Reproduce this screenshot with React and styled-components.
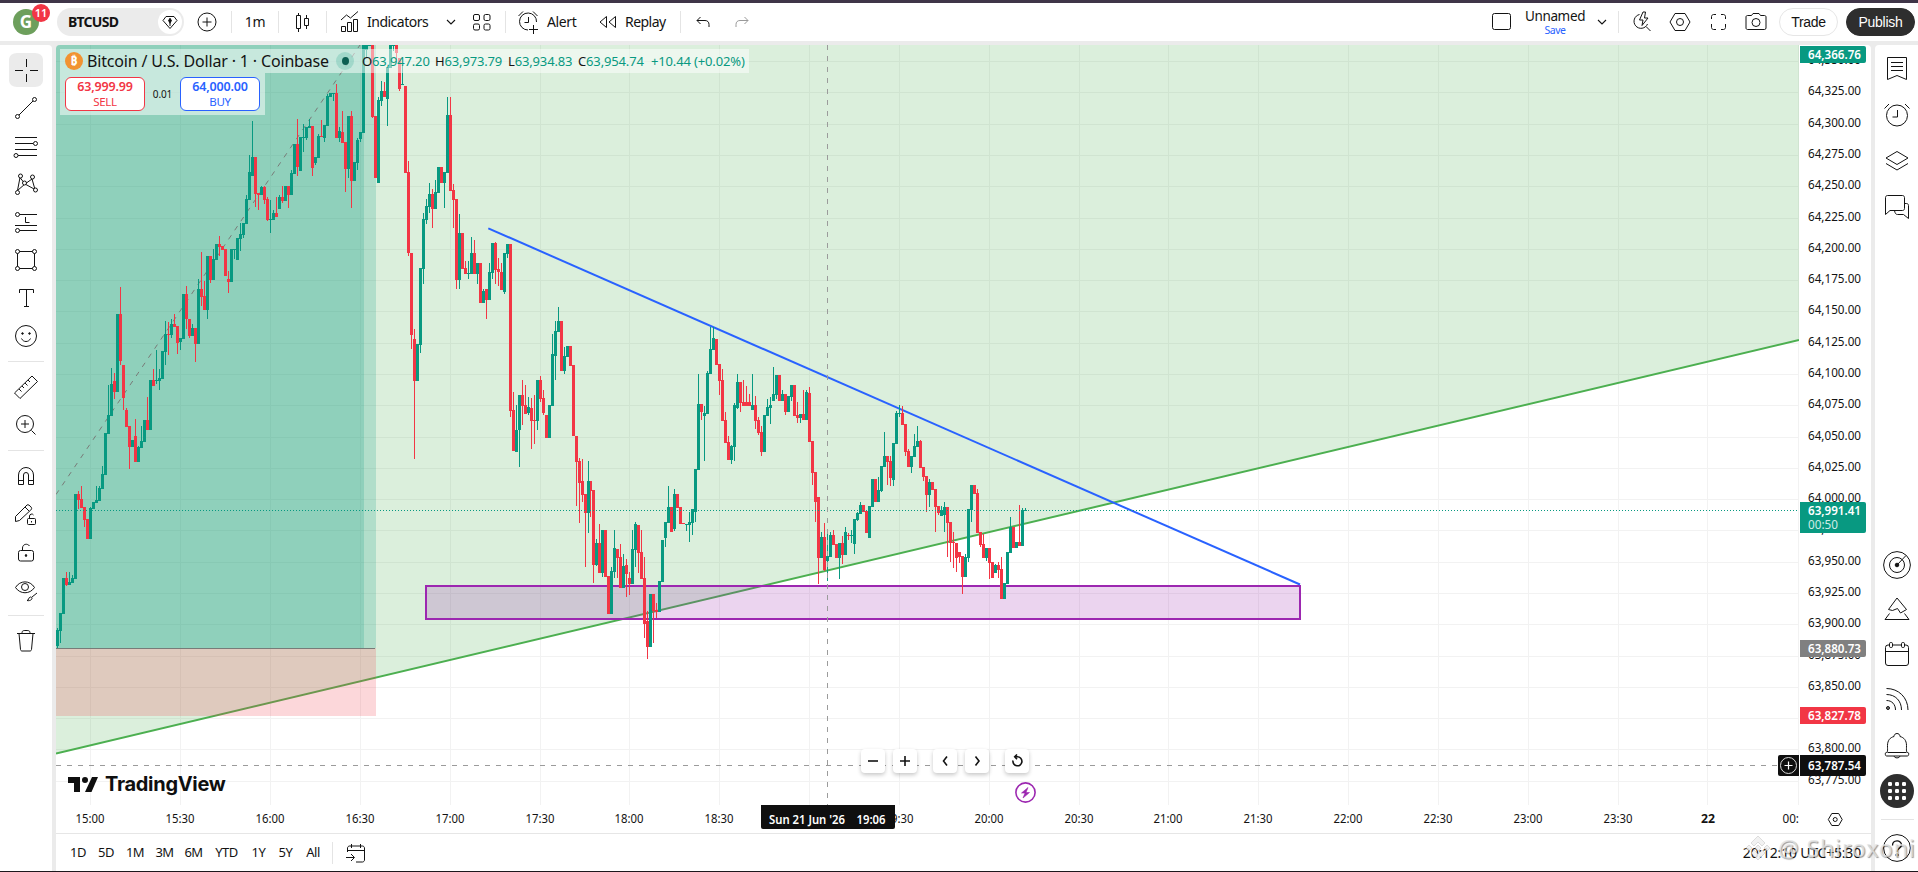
import React from "react";
import styled, { createGlobalStyle, css } from "styled-components";

const GlobalStyle = createGlobalStyle`
  * { box-sizing: border-box; }
  html, body { margin: 0; padding: 0; }
  body {
    background: #ebebeb;
    color: #0f0f0f;
    font-family: "Noto Sans", "Open Sans", sans-serif;
    overflow: hidden;
  }
`;

const INK = "#131313";
const UP = "#089981";
const DOWN = "#f23645";
const GAP = "#ebebeb";

/* ---------- page frame ---------- */

const Page = styled.div`
  width: 1918px;
  height: 872px;
  display: flex;
  flex-direction: column;
  background: ${GAP};
  border-top: 3px solid #3f3548;
  border-bottom: 1px solid #1d171d;
`;

const Header = styled.header`
  height: 38px;
  flex: none;
  display: flex;
  align-items: center;
  background: #fff;
  margin-bottom: 4px;
`;

const Body = styled.div`
  flex: 1;
  min-height: 0;
  display: flex;
  gap: 4px;
`;

const Center = styled.main`
  width: 1815px;
  display: flex;
  flex-direction: column;
  background: #fff;
  border-radius: 4px 4px 0 0;
  overflow: hidden;
`;

const SideBar = styled.nav`
  width: ${(p) => p.$w}px;
  flex: none;
  display: flex;
  flex-direction: column;
  align-items: center;
  background: #fff;
  border-radius: ${(p) => (p.$right ? "4px 0 0 0" : "0 4px 0 0")};
  padding: ${(p) => (p.$right ? "1px 0 0 1px" : "6px 0 0")};
`;

/* ---------- header parts ---------- */

const Cell = styled.div`
  width: ${(p) => p.$w}px;
  flex: none;
  height: 34px;
  margin-right: ${(p) => p.$mr || 0}px;
  display: flex;
  align-items: center;
  justify-content: ${(p) => (p.$start ? "flex-start" : "center")};
  svg { flex: none; }
`;

const VSep = styled.div`
  width: 1px;
  height: ${(p) => p.$h || 22}px;
  flex: none;
  margin-right: ${(p) => p.$mr || 0}px;
  background: #e4e4e4;
`;

const Label = styled.span`
  font-size: ${(p) => p.$size || 14}px;
  font-weight: ${(p) => p.$weight || 400};
  letter-spacing: ${(p) => p.$ls || 0}px;
  color: ${(p) => p.$color || INK};
  line-height: 1;
  white-space: nowrap;
`;

const Avatar = styled.div`
  position: relative;
  width: 26px;
  height: 26px;
  margin: 0 18px 0 13px;
  flex: none;
  border-radius: 50%;
  background: #6d9f5c;
  color: #fff;
  font: 700 17px/26px "Open Sans", sans-serif;
  text-align: center;
`;

const Badge = styled.span`
  position: absolute;
  left: 19px;
  top: -5px;
  width: 18px;
  height: 18px;
  border-radius: 50%;
  background: ${DOWN};
  font: 600 11px/18px "Noto Sans", sans-serif;
`;

const SymbolPill = styled.div`
  width: 127px;
  height: 28px;
  flex: none;
  padding: 0 2px 0 11px;
  border-radius: 14px;
  background: #ebebeb;
  display: flex;
  align-items: center;
  justify-content: space-between;
`;

const PillDisc = styled.span`
  width: 24px;
  height: 24px;
  border-radius: 50%;
  background: #fff;
  display: grid;
  place-items: center;
`;

const LayoutName = styled.div`
  width: 62px;
  flex: none;
  display: flex;
  flex-direction: column;
  align-items: center;
  gap: 1px;
  padding-top: 1px;
`;

const RoundButton = styled.button`
  width: ${(p) => p.$w}px;
  height: 28px;
  flex: none;
  padding: 0;
  border-radius: 14px;
  border: 1px solid ${(p) => (p.$dark ? "#2e2e2e" : "#e6e6e6")};
  background: ${(p) => (p.$dark ? "#2e2e2e" : "#fff")};
  margin-right: ${(p) => p.$mr}px;
`;

/* ---------- side tool cells ---------- */

const Tool = styled.div`
  width: 34px;
  height: ${(p) => p.$h || 38}px;
  flex: none;
  display: grid;
  place-items: center;
  ${(p) =>
    p.$active &&
    css`
      background: #ebebeb;
      background-clip: padding-box;
      border-top: 2px solid transparent;
      border-bottom: 2px solid transparent;
      border-radius: 8px;
    `}
`;

const HSep = styled.div`
  width: ${(p) => p.$w || 36}px;
  height: 1px;
  flex: none;
  margin: ${(p) => p.$m || "6px 0"};
  background: #e4e4e4;
`;

const Push = styled.div`
  ${(p) => (p.$row ? "margin-left" : "margin-top")}: auto;
`;

const AppsDisc = styled.div`
  width: 34px;
  height: 34px;
  border-radius: 50%;
  background: #2e2e2e;
  display: grid;
  place-items: center;
`;

/* ---------- chart parts ---------- */

const ChartArea = styled.section`
  position: relative;
  width: 1815px;
  height: 788px;
  flex: none;
`;

const ChartSvg = styled.svg`
  display: block;
  text {
    font-family: "Noto Sans", "Open Sans", sans-serif;
    font-size: 12px;
    fill: ${INK};
  }
`;

const Legend = styled.div`
  position: absolute;
  left: 4px;
  top: 4px;
`;

const LegendRow = styled.div`
  width: 689px;
  height: 24px;
  padding-left: 5px;
  display: flex;
  align-items: center;
  background: rgba(255, 255, 255, 0.5);
`;

const TradeRow = styled.div`
  width: 205px;
  height: 42px;
  padding: 4px 5px 4px;
  display: flex;
  align-items: center;
  justify-content: space-between;
  background: rgba(255, 255, 255, 0.5);
`;

const TradeButton = styled.div`
  width: 80px;
  height: 34px;
  border: 1px solid ${(p) => p.$c};
  border-radius: 6px;
  background: #fff;
  color: ${(p) => p.$c};
  display: flex;
  flex-direction: column;
  align-items: center;
  justify-content: center;
  gap: 2px;
`;

const Coin = styled.span`
  width: 18px;
  height: 18px;
  margin-right: 4px;
  border-radius: 50%;
  background: #f19332;
  color: #fff;
  display: grid;
  place-items: center;
`;

const StatusDot = styled.span`
  width: 18px;
  height: 18px;
  margin: 0 8px 0 8px;
  border-radius: 50%;
  background: rgba(8, 153, 129, 0.2);
  display: grid;
  place-items: center;
  &::after {
    content: "";
    width: 7px;
    height: 8px;
    border-radius: 50%;
    background: #0b5f52;
  }
`;

const Ohlc = styled.span`
  width: ${(p) => p.$w}px;
  flex: none;
  font-size: 13px;
  line-height: 1;
  letter-spacing: -0.15px;
  white-space: nowrap;
  color: ${UP};
  b { font-weight: 400; color: ${INK}; }
`;

const NavControls = styled.div`
  position: absolute;
  left: 805px;
  top: 704px;
  display: flex;
  gap: 8px;
`;

const NavButton = styled.div`
  width: 24px;
  height: 24px;
  margin-left: ${(p) => p.$ml || 0}px;
  border-radius: 4px;
  background: #fff;
  box-shadow: 0 2px 4px rgba(0, 0, 0, 0.22);
  display: grid;
  place-items: center;
`;

const Brand = styled.div`
  position: absolute;
  left: 12px;
  top: 727px;
  display: flex;
  align-items: center;
  gap: 7px;
  font: 700 20px/24px "Inter", sans-serif;
  letter-spacing: -0.3px;
  color: #0f0f0f;
`;

/* ---------- bottom bar ---------- */

const BottomBar = styled.footer`
  flex: 1;
  border-top: 1px solid #e6e6e6;
  padding: 0 10px 0 8px;
  display: flex;
  align-items: center;
`;

const Watermark = styled.div`
  position: absolute;
  left: 1746px;
  top: 832px;
  display: flex;
  align-items: center;
  gap: 8px;
  font: 400 23px/32px "Noto Sans", sans-serif;
  letter-spacing: 0.9px;
  color: rgba(228, 228, 228, 0.8);
  text-shadow: 1px 1px 1px rgba(0, 0, 0, 0.4);
  white-space: nowrap;
`;

/* ---------- icons ---------- */

const Icon = ({ size = 28, w, h, sw = 1, color = INK, children }) => (
  <svg
    width={w || size}
    height={h || size}
    viewBox={`0 0 ${w || size} ${h || size}`}
    fill="none"
    stroke={color}
    strokeWidth={sw}
  >
    {children}
  </svg>
);

const Chevron = () => (
  <Icon size={12}><path d="M2 4l4 4 4-4" strokeWidth="1.1" /></Icon>
);

/* ---------- chart data: [direction, bodyTop, bodyBottom, wickTop, wickBottom] per minute ---------- */

const BARS = `
g 630 646 628 648|g 613 631 613 643|g 578 614|r 578 585 572 586|g 582 585 572 585|g 578 583 575 583|g 494 579|r 494 500 491 509|r 499 508 486 508|r 507 520 507 527|
r 519 539|g 508 539 507 539|g 502 509|g 500 503 486 503|g 488 501 486 501|g 474 489 466 489|g 433 475|g 415 434 385 434|g 384 416 368 416|r 381 392 373 399|
g 314 392|r 314 361 287 365|r 365 398 365 410|r 410 427 408 427|r 426 447 426 469|g 440 447|r 436 462 419 462|g 447 462 446 462|g 441 448 426 448|g 420 442|
r 420 430 397 430|g 380 430|r 380 386 369 386|g 380 381 350 384|g 378 381 369 390|g 351 379|g 334 352 321 365|r 334 335 322 355|g 324 335 319 338|r 324 327 314 327|
r 326 343 326 354|g 338 342 338 350|g 294 339|r 294 319 286 329|r 319 336 319 338|g 328 336 324 336|r 328 344 328 362|g 289 344 279 344|r 289 297 252 306|r 296 310 281 310|
g 256 310 256 319|r 256 280 256 283|g 259 280 249 280|g 244 260|r 244 247 236 256|r 246 250|r 249 276|r 279 282 271 293|g 249 282|g 249 250 249 259|
g 238 260|g 234 239 223 251|g 223 235 223 238|g 199 224 195 224|g 172 200 155 200|g 157 176 121 176|r 157 194 157 207|r 193 195 193 210|g 187 195 186 195|r 187 200 186 204|
r 199 220 197 221|g 219 220 200 233|g 213 220 210 220|r 213 217 197 217|g 197 209 195 209|r 197 201 186 203|g 186 201|r 186 195 186 208|g 173 195 170 195|g 144 174|
r 144 167 119 176|g 137 171|g 137 138 124 152|g 127 138 127 140|g 126 128 119 128|r 126 168 126 176|g 157 163 157 165|g 136 158 134 158|r 136 137 120 137|g 125 138 125 142|
g 96 126 94 126|g 93 97|g 93 94 93 101|r 93 138 84 138|g 131 138 127 142|r 132 143 111 143|r 142 169 142 192|g 116 169 116 178|r 116 181 111 208|g 162 181|
g 140 163 138 170|g 132 139 132 142|g 40 133|g 45 50 40 58|g 40 46|r 40 117 40 118|r 116 178|g 100 183 97 183|g 91 101 81 106|r 91 97 82 97|
g 67 99 67 126|g 40 68|g 40 46 40 51|r 40 53 40 60|r 58 89 58 91|g 84 85 65 85|r 86 173|r 172 253 161 256|r 253 335 253 349|r 339 381 329 459|
g 344 381|g 268 345 268 353|g 219 269 213 284|g 206 220 199 224|g 194 207 183 213|r 194 209 189 228|g 192 209 180 209|g 167 193|r 167 183|g 172 183 172 208|
g 115 173 97 173|r 115 191 97 191|r 190 200 184 228|r 199 280 199 289|g 233 280 214 289|r 233 269|r 268 274 261 274|g 273 274 261 279|g 253 274 237 274|r 253 274 240 274|
g 263 274 263 284|r 263 303|g 291 303 289 303|r 289 300 289 319|g 272 300 263 300|g 243 273 243 279|r 243 270 242 284|r 269 272 258 286|r 272 290 263 290|g 253 292 253 294|
g 244 254 244 258|r 244 411 244 417|r 410 451 392 451|g 430 452 405 452|g 395 430 395 467|r 395 406 380 425|r 405 414 385 414|g 407 413 397 415|r 408 421 398 449|r 420 421 395 444|
g 380 421 380 430|r 380 399 376 402|r 398 413 390 415|r 415 438|g 405 438|g 354 406 334 406|g 331 356 321 380|g 321 332 307 332|r 321 371|g 356 371 347 374|
g 346 357|r 346 366|r 365 436|r 436 462 436 506|r 461 483 458 523|r 481 495 459 502|r 494 513 494 567|g 481 513 461 533|r 481 491 481 517|r 490 565 490 583|
g 543 565 539 566|r 543 573 524 573|g 530 573 530 577|r 530 577|r 576 614|g 571 614 567 614|g 548 572 530 578|r 549 558 549 578|r 557 588 544 588|g 566 588 554 588|
r 565 574 559 597|r 578 584 572 595|g 549 584 530 584|g 524 550 522 567|r 525 553 525 573|r 552 579 530 579|r 578 624 557 638|r 621 647 611 659|g 594 647|r 594 611 594 643|
r 610 612 603 618|g 581 612|g 540 582|g 522 538 522 547|g 507 523 486 523|r 507 532|g 494 529 489 531|r 494 508|r 507 524|r 523 524|
g 524 525 524 531|g 522 525 512 542|g 509 523 509 535|g 469 512 469 522|g 404 470 374 470|r 404 412 404 420|g 413 416 406 461|g 373 414 371 414|g 349 374 327 374|g 338 350 327 350|
r 339 365|r 364 381 364 395|r 380 421 369 421|r 420 443 412 443|r 442 460 436 460|g 446 460 445 464|g 405 447 403 461|g 382 408 374 409|r 382 403 382 412|r 402 406 380 406|
r 402 406 386 406|r 402 406 394 406|g 405 410 374 410|r 405 421 396 429|r 420 433 417 435|r 432 452 426 456|g 415 452|g 407 416 399 416|g 405 408 397 424|g 394 401 367 401|
g 375 395 375 399|r 375 401|g 394 401 390 401|r 394 412 394 415|g 396 412|g 385 397 385 401|r 385 416|r 415 418 402 423|g 414 418 414 423|r 414 420 390 420|
g 392 420 390 420|r 393 442 387 442|r 441 473 441 485|r 472 502 472 522|r 497 558 497 584|g 537 558 532 558|r 537 570 523 571|g 556 561 534 581|g 535 557 532 557|r 535 545 530 545|
r 544 558|g 543 558 543 579|r 543 555 536 564|g 532 555 527 555|r 535 536 533 540|g 535 536 530 543|g 519 544 519 554|g 513 520 512 521|g 505 514 502 514|r 505 512|
r 511 533|g 506 538|g 479 507|r 479 502|g 490 502 477 502|g 466 491 466 492|g 456 467 432 467|r 456 462 456 485|r 461 478 456 486|g 443 480 443 486|
g 413 444 411 444|g 413 414 405 417|r 413 425 406 425|r 424 452 424 456|r 451 467 449 467|g 456 467 456 473|g 446 457 434 457|g 441 447 426 447|r 441 468 440 468|r 467 477 467 481|
r 476 495 476 512|g 482 495 479 507|r 482 490|r 489 507 489 532|r 506 513 506 515|g 510 516 506 516|g 507 515 502 532|r 507 523 507 557|r 522 543 522 562|r 542 543 532 568|
r 543 558 543 572|r 552 557 552 563|r 556 577 556 594|g 557 577 554 577|g 509 558 509 562|g 485 510 485 522|r 485 494|r 493 533 489 533|r 532 545 532 547|r 544 558 534 558|
g 548 558 548 561|r 548 563 548 579|r 562 578|g 565 573 564 573|r 565 570 562 578|r 569 599 557 599|g 583 599|g 552 584|g 527 553 517 553|r 527 548|
g 542 548|r 542 546 505 546|g 510 546 508 546|g 510 511 508 511`
  .trim()
  .split("|")
  .map((s, i) => {
    const [dir, ...n] = s.trim().split(" ");
    const [bt, bb, wt = bt, wb = bb] = n.map(Number);
    return { x: i <= 177 ? 57 + 3 * i : 56 + 3 * i, up: dir === "g", bt, bb, wt, wb };
  });

const rowY = (i) => Math.floor(61.6 + 31.29 * i);
const PRICES = Array.from({ length: 24 }, (_, i) => ({
  y: rowY(i),
  text: (64350 - 25 * i).toLocaleString("en-US") + ".00",
}));
const minuteX = (j) => Math.round(57.495 + 2.9944 * (11 + 30 * j));
const TIMES = Array.from({ length: 19 }, (_, j) => {
  const m = 15 * 60 + 30 * j;
  const hh = String(Math.floor(m / 60) % 24).padStart(2, "0");
  const mm = String(m % 60).padStart(2, "0");
  return { x: minuteX(j), text: j === 18 ? "22" : `${hh}:${mm}` };
});

const Candles = ({ up }) => {
  const d = BARS.filter((b) => b.up === up)
    .map(
      (b) =>
        `M${b.x - 1} ${b.bt}h3V${b.bb}h-3z` +
        (b.wt < b.bt ? `M${b.x} ${b.wt}h1V${b.bt}h-1z` : "") +
        (b.wb > b.bb ? `M${b.x} ${b.bb}h1V${b.wb}h-1z` : "")
    )
    .join("");
  return <path d={d} fill={up ? UP : DOWN} shapeRendering="crispEdges" />;
};

const PriceTag = ({ y, h, color, text, sub }) => (
  <g>
    <path d={`M1800 ${y}h64a2 2 0 0 1 2 2v${h - 4}a2 2 0 0 1-2 2h-64z`} fill={color} />
    <text x="1808" y={sub ? y + 12.5 : y + h / 2 + 4} textLength="53" lengthAdjust="spacingAndGlyphs" style={{ fill: "#fff", fontWeight: 600 }}>{text}</text>
    {sub && (
      <text x="1808" y={y + 26.5} textLength="30" lengthAdjust="spacingAndGlyphs" style={{ fill: "#cfebe6" }}>{sub}</text>
    )}
  </g>
);

const Chart = () => (
  <ChartSvg width="1815" height="788" viewBox="56 45 1815 788">
    <defs>
      <clipPath id="pane"><rect x="56" y="45" width="1743" height="760" /></clipPath>
    </defs>
    <g clipPath="url(#pane)">
      <g fill="#f2f2f2">
        {PRICES.map((p) => <rect key={p.y} x="56" y={p.y} width="1743" height="1" />)}
        {TIMES.map((t) => <rect key={t.x} x={t.x} y="45" width="1" height="760" />)}
        <rect x="1798" y="45" width="1" height="760" />
      </g>
      <path d="M56 45H1799V340L56 753.5z" fill="#4caf50" fillOpacity="0.2" />
      <path d="M56 753.5L1799 340" stroke="#4caf50" strokeWidth="2" />
      <rect x="56" y="648" width="320" height="68" fill={DOWN} fillOpacity="0.2" />
      <rect x="56" y="45" width="320" height="603" fill={UP} fillOpacity="0.2" />
      <rect x="56" y="45" width="308" height="603" fill={UP} fillOpacity="0.2" />
      <rect x="56" y="648" width="319" height="1" fill="#787b78" />
      <path d="M56 494.5L360 45" stroke="#787b78" strokeDasharray="5 6" />
      <rect x="426" y="586" width="874" height="33" fill="#9c27b0" fillOpacity="0.2" stroke="#9c27b0" strokeWidth="2" />
      <path d="M488.3 228.3L1300 584.5" stroke="#2962ff" strokeWidth="2" />
      <Candles up={false} />
      <Candles up />
      <path d="M56 510.5H1799" stroke={UP} strokeDasharray="1 2" />
      <path d="M827.5 45V805M56 765.5H1778" stroke="#9b9b9b" strokeDasharray="5 6" />
      <circle cx="1025.500" cy="792.5" r="9.6" fill="#fff" stroke="#9c27b0" strokeWidth="1.6" />
      <path d="M1028 787.5L1021.500 793h3.5l-2 5 6.500-5.500h-3.500z" fill="#9c27b0" stroke="#9c27b0" strokeWidth="0.6" />
    </g>

    {PRICES.map((p) => (
      <text key={p.y} x="1808" y={p.y + 3.3} textLength="53" lengthAdjust="spacingAndGlyphs">{p.text}</text>
    ))}
    <PriceTag y={46} h={17} color={UP} text="64,366.76" />
    <PriceTag y={502} h={31} color={UP} text="63,991.41" sub="00:50" />
    <PriceTag y={640} h={17} color="#808080" text="63,880.73" />
    <PriceTag y={707} h={17} color={DOWN} text="63,827.78" />
    <PriceTag y={755} h={21} color="#0f0f0f" text="63,787.54" />
    <path d="M1799 755h-19a2 2 0 0 0-2 2v17a2 2 0 0 0 2 2h19z" fill="#0f0f0f" />
    <circle cx="1788.500" cy="765.500" r="8" fill="none" stroke="#d8d8d8" />
    <path d="M1784.500 765.500h8M1788.500 761.500v8" stroke="#fff" strokeWidth="1.2" />

    {TIMES.slice(0, 18).map((t) => (
      <text key={t.x} x={t.x - 14.5} y="823.3" textLength="29" lengthAdjust="spacingAndGlyphs">{t.text}</text>
    ))}
    <text x="1701" y="823.3" textLength="14" lengthAdjust="spacingAndGlyphs" style={{ fontWeight: 700 }}>22</text>
    <text x="1782.500" y="823.3" textLength="16.500" lengthAdjust="spacingAndGlyphs">00:</text>
    <path d="M761 805h134v22a2 2 0 0 1-2 2h-130a2 2 0 0 1-2-2z" fill="#0f0f0f" />
    <text x="769" y="824.300" textLength="76" lengthAdjust="spacingAndGlyphs" style={{ fill: "#fff", fontWeight: 600 }}>Sun 21 Jun '26</text>
    <text x="856.500" y="824.300" textLength="29" lengthAdjust="spacingAndGlyphs" style={{ fill: "#fff", fontWeight: 600 }}>19:06</text>
    <g fill="none" stroke={INK}>
      <path d="M1831.800 813.500h6.900l3.500 6-3.500 6h-6.900l-3.500-6z" />
      <circle cx="1835.200" cy="819.500" r="2" />
    </g>
  </ChartSvg>
);

const LeftTools = () => (
  <SideBar $w={52}>
    <Tool $active><Icon><path d="M14.500 3v8M14.500 18v8M3 14.500h8M18 14.500h8" /></Icon></Tool>
    <Tool><Icon><circle cx="5.500" cy="22.500" r="2" /><circle cx="22.500" cy="5.500" r="2" /><path d="M7 21L21 7" /></Icon></Tool>
    <Tool><Icon><path d="M3 5.500h22M3 11.500h18M3 17.500h22M6 23.500h19" /><circle cx="23.500" cy="11.500" r="2" fill="#fff" /><circle cx="4" cy="23.500" r="2" fill="#fff" /></Icon></Tool>
    <Tool><Icon><path d="M5.500 20.500L8 7.500l5 6.500 7-5 3 10.500-10-5.500z" /><g fill="#fff"><circle cx="8.500" cy="6" r="2" /><circle cx="20.500" cy="7" r="2" /><circle cx="5.500" cy="22.500" r="2" /><circle cx="23.500" cy="20" r="2" /><circle cx="12.500" cy="13" r="2" /></g></Icon></Tool>
    <Tool><Icon><path d="M7.500 6.500H25M3 17.500h22M7.500 22.500H25M13.500 9v5.500h4" /><circle cx="5.500" cy="6.500" r="2" /><circle cx="5.500" cy="22.500" r="2" /></Icon></Tool>
    <Tool><Icon><path d="M7.500 5.500h13M7.500 22.500h13M5.500 7.500v13M22.500 7.500v13" /><circle cx="5.500" cy="5.500" r="2" /><circle cx="22.500" cy="5.500" r="2" /><circle cx="5.500" cy="22.500" r="2" /><circle cx="22.500" cy="22.500" r="2" /></Icon></Tool>
    <Tool><Icon><path d="M7.500 9V5.500h14V9M14.500 5.500v17M12 22.500h5" /></Icon></Tool>
    <Tool><Icon><circle cx="14" cy="14" r="10.500" /><path d="M9.500 16.500c1 2 2.500 3 4.500 3s3.500-1 4.500-3" /><circle cx="10.500" cy="11.500" r=".8" fill={INK} /><circle cx="17.500" cy="11.500" r=".8" fill={INK} /></Icon></Tool>
    <HSep />
    <Tool><Icon><path d="M2.500 20L20 3l5.500 5.500L8 25.500zM7 16l2.500 2.500M10 13l2 2M13 10l2.500 2.500M16 7l2 2" /></Icon></Tool>
    <Tool><Icon><circle cx="13" cy="13" r="8.500" /><path d="M19.500 19.500l4 4M9 13h8M13 9v8" /></Icon></Tool>
    <HSep />
    <Tool><Icon><path d="M6.500 22.500V13a7.500 7.500 0 0 1 15 0v9.500h-5V13a2.500 2.500 0 0 0-5 0v9.500zM6.500 18.500h5M16.500 18.500h5" /></Icon></Tool>
    <Tool><Icon><path d="M3.500 16.500L15 5c1-1 3 .8 4 2s.8 2-.2 3L7.500 20.500l-4 1zM13 7l4 4" /><rect x="15.500" y="18.500" width="8" height="6" rx="1" /><path d="M17.500 18.500V16a2.200 2.200 0 0 1 4-1M19.500 21v1.500" /></Icon></Tool>
    <Tool><Icon><rect x="6.500" y="12.500" width="15" height="10.500" rx="2" /><path d="M10.500 12.500V10c0-4 5-5 7-2M14 16v3" /><circle cx="14" cy="17.500" r=".7" fill={INK} /></Icon></Tool>
    <Tool><Icon><path d="M3.500 11.500c4.500-7.500 14.500-7.500 19 0-4.500 7-14.500 7-19 0z" /><circle cx="13" cy="11" r="3.500" /><path d="M15 24.500c2 0 1-3 3.500-3.500 1.500 0 2 1.500 1 2.500s-3 1.500-4.500 1zM20 21l5-4" /></Icon></Tool>
    <HSep />
    <Tool><Icon><path d="M5 6.500h18M10 6.500c0-3 1-3 4-3s4 0 4 3M7 6.500l1.500 16c.1 1 .8 1.500 1.500 1.500h8c.7 0 1.400-.5 1.500-1.500L21 6.500" /></Icon></Tool>
  </SideBar>
);

const RightTools = () => (
  <SideBar $w={43} $right>
    <Tool $h={46}><Icon><path d="M4.500 2.500h19v22l-9.500-4-9.500 4zM8 7.500h12M8 11.500h12M8 15.500h12" /></Icon></Tool>
    <Tool $h={46}><Icon><circle cx="14" cy="14.500" r="10.500" /><path d="M14.500 9v7h-5M1.500 7.500l4.500-4.500M22 3l4.500 4.500" /></Icon></Tool>
    <Tool $h={46}><Icon><path d="M14 4.500l11 6.500-11 6.500L3 11zM3 16.500l11 6.500 11-6.500" /></Icon></Tool>
    <Tool $h={46}><Icon><path d="M2.500 4.500c0-1 .8-2 2-2h15c1.200 0 2 1 2 2v11c0 1.200-.8 2-2 2H7l-4.500 4zM21.500 10.500h2c1.200 0 2 .8 2 2v13l-5-4h-6c-1.500 0-2.500-1-3-4" /></Icon></Tool>
    <Push />
    <Tool $h={44}><Icon><circle cx="14" cy="14" r="13.400" /><circle cx="14" cy="14" r="7.500" /><path d="M14 14l9-9.500" /><circle cx="14" cy="14" r="1.800" fill={INK} /></Icon></Tool>
    <Tool $h={44}><Icon><path d="M14 3l9.500 11.500-6 3.500-3-4.500-5 2-4-1zM6.500 18.500L2 24.500h24l-4.500-6" /></Icon></Tool>
    <Tool $h={45}><Icon><rect x="2.500" y="5" width="23" height="20.500" rx="2.500" /><path d="M2.500 11.500h23" /><rect x="6.500" y="2.500" width="3" height="5" rx="1.200" fill="#fff" /><rect x="18.500" y="2.500" width="3" height="5" rx="1.200" fill="#fff" /></Icon></Tool>
    <Tool $h={46}><Icon><path d="M3.500 3.500c12 0 21.500 9 21.500 21.500M3.500 9.500c9 0 15 6.500 15 15.500M3.500 15.500c5.500 0 9 4 9 9.500" /><circle cx="5" cy="23" r="1.500" fill="#777" /></Icon></Tool>
    <Tool $h={46}><Icon><path d="M3 21.500c2 0 1.500-2 1.500-7 0-5 2.500-8 6.500-9 0-4 6-4 6 0 4 1 6.500 4 6.500 9 0 5-.5 7 1.500 7 1 0 1 3.500-.5 3.500H3.500c-1.500 0-1.500-3.500-.5-3.500zM4.500 21.500h19M11 25c.5 2.500 5.500 2.500 6 0" /></Icon></Tool>
    <Tool $h={46}>
      <AppsDisc>
        <Icon size={18} color="none">
          {[2, 9, 16].map((y) => [2, 9, 16].map((x) => <rect key={x + "-" + y} x={x - 2} y={y - 2} width="4" height="4" rx="1.300" fill="#fff" />))}
        </Icon>
      </AppsDisc>
    </Tool>
    <HSep $w={33} $m="5px 0 5px" />
    <Tool $h={46}><Icon><circle cx="14" cy="14" r="13.400" /><path d="M9.500 11.500c0-6 9-6 9-.5 0 3.500-4.500 3-4.500 7" strokeWidth="1.300" /><circle cx="14" cy="21" r="1.200" /></Icon></Tool>
  </SideBar>
);

const TopBar = () => (
  <Header>
    <Avatar>G<Badge>11</Badge></Avatar>
    <SymbolPill>
      <Label $size={14} $weight={700} $ls={-0.75}>BTCUSD</Label>
      <PillDisc><Icon size={18}><path d="M5 3.500h8l3 4-7 8-7-8z" /><path d="M9 5l2 2.500L9 11 7 7.500z" fill={INK} stroke="none" /><path d="M9 5v8" /></Icon></PillDisc>
    </SymbolPill>
    <Cell $w={45} $mr={2}><Icon size={20}><circle cx="10" cy="10" r="9" /><path d="M10 5.500v9M5.500 10h9" /></Icon></Cell>
    <VSep />
    <Cell $w={46}><Label $ls={-0.4}>1m</Label></Cell>
    <VSep />
    <Cell $w={45} $mr={2}><Icon size={20}><path d="M4.500 3.500h4v13h-4zM6.500 1v2.500M6.500 16.500V20M12.500 6.500h4v7h-4zM14.500 3v3.500M14.500 13.500V17" /></Icon></Cell>
    <VSep />
    <Cell $w={106} $start>
      <Icon w={40}><path d="M14.500 18.500h4v5h-4zM20.500 14.500h4v9h-4zM26.500 11.500h4v12h-4zM14 12l5.500-5 4 3L31 3.500" /></Icon>
      <Label $ls={-0.5}>Indicators</Label>
    </Cell>
    <Cell $w={35}><Chevron /></Cell>
    <Cell $w={28} $mr={9}><Icon size={20}><rect x="1.500" y="2.500" width="6" height="6" rx="1.500" /><rect x="12" y="2.500" width="6" height="6" rx="1.500" /><rect x="1.500" y="12" width="6" height="6" rx="1.500" /><rect x="12" y="12" width="6" height="6" rx="1.500" /></Icon></Cell>
    <VSep />
    <Cell $w={88} $start>
      <Icon w={41}><path d="M22 22a8.500 8.500 0 1 1 8.500-8M22.500 9v5.500h-4M12.500 8l4.500-4.500M27 3.500L31.500 8M27.500 17v9M23 21.500h9" /></Icon>
      <Label $ls={-0.4}>Alert</Label>
    </Cell>
    <Cell $w={86} $start>
      <Icon w={31}><path d="M12.500 8.500v11L6 14zM21.500 8.500v11L15 14z" /></Icon>
      <Label $ls={-0.55}>Replay</Label>
    </Cell>
    <VSep />
    <Cell $w={44}><Icon size={16}><path d="M5.500 3L2 6.500 5.500 10M2 6.500h8c2.500 0 4 1.500 4 4V13" /></Icon></Cell>
    <Cell $w={33}><Icon size={16} color="#9a9a9a"><path d="M10.500 3L14 6.500 10.500 10M14 6.500H6c-2.500 0-4 1.500-4 4V13" /></Icon></Cell>
    <Push $row />
    <Cell $w={44}><Icon size={20}><rect x=".5" y="1.500" width="18" height="16" rx="2" /></Icon></Cell>
    <LayoutName>
      <Label $size={13.500} $ls={-0.35}>Unnamed</Label>
      <Label $size={10.500} $ls={-0.5} $color="#2962ff">Save</Label>
    </LayoutName>
    <Cell $w={32}><Chevron /></Cell>
    <VSep $mr={5} />
    <Cell $w={36}><Icon size={22}><path d="M8.500 3.500a7 7 0 1 0 8 9.500M15 15.500l4.500 4.500M12 1L8.500 9H12l-1 5.500L17 7h-3.500l1-6z" /></Icon></Cell>
    <Cell $w={40}><Icon size={22}><path d="M6 2.500h10l5 8.500-5 8.500H6L1 11z" /><circle cx="11" cy="11" r="3.500" /></Icon></Cell>
    <Cell $w={38}><Icon size={18}><path d="M1.500 6V3.500c0-1 1-2 2-2H6M11 1.500h2.500c1 0 2 1 2 2V6M15.500 11v3.500c0 1-1 2-2 2H11M6 16.500H3.500c-1 0-2-1-2-2V11" /></Icon></Cell>
    <Cell $w={35} $mr={6}><Icon size={22}><path d="M6.500 4.500L8 2.500h6l1.500 2h4c1 0 1.500.7 1.500 1.500v11c0 1-.7 1.500-1.500 1.500h-17c-1 0-1.500-.7-1.500-1.500V6c0-1 .7-1.500 1.500-1.500z" /><circle cx="11" cy="11.500" r="4" /></Icon></Cell>
    <RoundButton $w={59} $mr={8}><Label $size={14} $ls={-0.3}>Trade</Label></RoundButton>
    <RoundButton $w={69} $mr={3} $dark><Label $size={14} $ls={-0.3} $color="#fff">Publish</Label></RoundButton>
  </Header>
);

const RANGES = [["1D", 28], ["5D", 28], ["1M", 30], ["3M", 29], ["6M", 29], ["YTD", 37], ["1Y", 27], ["5Y", 27], ["All", 28]];

export default function App() {
  return (
    <>
      <GlobalStyle />
      <Page>
        <TopBar />
        <Body>
          <LeftTools />
          <Center>
            <ChartArea>
              <Chart />
              <Legend>
                <LegendRow>
                  <Coin><Label $size={12} $weight={700} $color="#fff">₿</Label></Coin>
                  <Cell $w={241} $start><Label $size={16} $ls={-0.16}>Bitcoin / U.S. Dollar · 1 · Coinbase</Label></Cell>
                  <StatusDot />
                  <Ohlc $w={73}><b>O</b>63,947.20</Ohlc>
                  <Ohlc $w={73}><b>H</b>63,973.79</Ohlc>
                  <Ohlc $w={70}><b>L</b>63,934.83</Ohlc>
                  <Ohlc $w={73}><b>C</b>63,954.74</Ohlc>
                  <Ohlc $w={95}>+10.44 (+0.02%)</Ohlc>
                </LegendRow>
                <TradeRow>
                  <TradeButton $c={DOWN}>
                    <Label $size={12.500} $weight={600} $ls={-0.15} $color={DOWN}>63,999.99</Label>
                    <Label $size={11.500} $ls={-0.3} $color={DOWN}>SELL</Label>
                  </TradeButton>
                  <Label $size={10} $ls={-0.1}>0.01</Label>
                  <TradeButton $c="#2962ff">
                    <Label $size={12.500} $weight={600} $ls={-0.15} $color="#2962ff">64,000.00</Label>
                    <Label $size={11.500} $ls={-0.3} $color="#2962ff">BUY</Label>
                  </TradeButton>
                </TradeRow>
              </Legend>
              <NavControls>
                <NavButton><Icon size={12} sw={1.600}><path d="M1 6h10" /></Icon></NavButton>
                <NavButton><Icon size={12} sw={1.600}><path d="M1 6h10M6 1v10" /></Icon></NavButton>
                <NavButton $ml={8}><Icon size={12} sw={1.600}><path d="M8 1.500L4.500 6 8 10.500" /></Icon></NavButton>
                <NavButton><Icon size={12} sw={1.600}><path d="M4.500 1.500L8 6l-3.500 4.500" /></Icon></NavButton>
                <NavButton $ml={8}><Icon size={14} sw={1.600}><path d="M3 6.500a4.500 4.500 0 1 0 4.500-3.700H5M7 .5L4.700 2.800 7 5.200" /></Icon></NavButton>
              </NavControls>
              <Brand>
                <svg width="30" height="15" viewBox="0 0 30 15"><path d="M0 0h12v15H6V6H0zM24 0h6l-6.500 15H17z" fill="#0f0f0f" /><circle cx="17" cy="3" r="3" fill="#0f0f0f" /></svg>
                TradingView
              </Brand>
            </ChartArea>
            <BottomBar>
              {RANGES.map(([t, w]) => (
                <Cell key={t} $w={w}><Label $size={13} $ls={-0.5}>{t}</Label></Cell>
              ))}
              <Cell $w={5} />
              <VSep />
              <Cell $w={45}><Icon w={20} h={20}><path d="M1.500 9V5c0-1 1-2 2-2h13c1 0 2 1 2 2v12c0 1-1 2-2 2H10M1.500 7.500h17M5.500 1v4M14.500 1v4M0 14.500h8M5 11l3.500 3.500L5 18" /></Icon></Cell>
              <Push $row />
              <Label $size={14} $ls={-0.2}>20:12:10 UTC+5:30</Label>
            </BottomBar>
          </Center>
          <RightTools />
        </Body>
        <Watermark>
          <svg width="24" height="24" viewBox="0 0 24 24" fill="rgba(240,240,240,.85)" stroke="rgba(0,0,0,.14)" strokeWidth=".8">
            <path d="M12 0l7 7-3 3-4-4-4 4-3-3zM12 9l3 3-3 3-3-3zM3 9l3 3-3 3-3-3zM21 9l3 3-3 3-3-3zM12 24l-7-7 3-3 4 4 4-4 3 3z" />
          </svg>
          <span>@ Shiroxoni</span>
        </Watermark>
      </Page>
    </>
  );
}
